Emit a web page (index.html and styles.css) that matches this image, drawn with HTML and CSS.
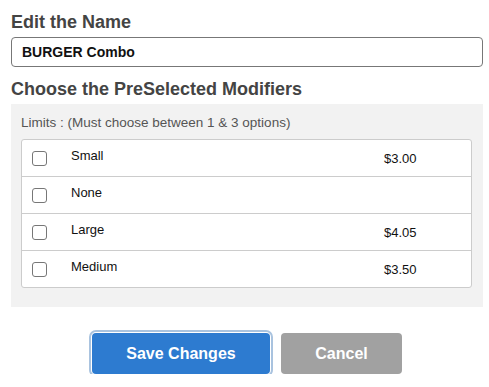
FILE: index.html
```html
<!DOCTYPE html>
<html lang="en">
<head>
  <meta charset="UTF-8" />
  <meta name="viewport" content="width=device-width, initial-scale=1.0"/>
  <title>Edit Combo</title>
  <link rel="stylesheet" href="styles.css">
</head>
<body>

  <div class="editor">
    <h2 class="section-title">Edit the Name</h2>
    <input type="text" class="name-input" value="BURGER Combo">

    <h2 class="section-title">Choose the PreSelected Modifiers</h2>
    <div class="modifiers-panel">
      <div class="limits">Limits : (Must choose between 1 &amp; 3 options)</div>
      <table class="modifiers-table">
        <tr>
          <td class="check-cell"><input type="checkbox" class="mod-check"></td>
          <td class="name-cell"><span>Small</span></td>
          <td class="price-cell">$3.00</td>
        </tr>
        <tr>
          <td class="check-cell"><input type="checkbox" class="mod-check"></td>
          <td class="name-cell"><span>None</span></td>
          <td class="price-cell"></td>
        </tr>
        <tr>
          <td class="check-cell"><input type="checkbox" class="mod-check"></td>
          <td class="name-cell"><span>Large</span></td>
          <td class="price-cell">$4.05</td>
        </tr>
        <tr>
          <td class="check-cell"><input type="checkbox" class="mod-check"></td>
          <td class="name-cell"><span>Medium</span></td>
          <td class="price-cell">$3.50</td>
        </tr>
      </table>
    </div>

    <div class="actions">
      <button class="btn btn-save">Save Changes</button>
      <button class="btn btn-cancel">Cancel</button>
    </div>
  </div>

</body>
</html>
```

FILE: styles.css
```css
body {
  margin: 0;
  font-family: 'Liberation Sans', Arial, sans-serif;
  background-color: #fff;
  color: #111;
}

.editor {
  padding: 11px 6px 0 11px;
}

.section-title {
  font-size: 18px;
  line-height: 22px;
  font-weight: bold;
  color: #444;
  margin: 0 0 4px;
}

.name-input {
  display: block;
  box-sizing: border-box;
  width: 472px;
  height: 30px;
  margin: 0 0 11px;
  padding: 0 10px;
  border: 1px solid #777;
  border-radius: 4px;
  font-family: inherit;
  font-size: 14px;
  font-weight: bold;
  color: #111;
}

.modifiers-panel {
  width: 472px;
  box-sizing: border-box;
  background-color: #f2f2f2;
  padding: 11px 11px 19px 10px;
  margin-top: 3px;
}

.limits {
  font-size: 13.5px;
  color: #555;
  line-height: 16px;
  margin-bottom: 8px;
}

.modifiers-table {
  width: 100%;
  border-collapse: separate;
  border-spacing: 0;
  background-color: #fff;
  border: 1px solid #ccc;
  border-radius: 3px;
  font-size: 13px;
}

.modifiers-table td {
  height: 36px;
  padding: 0;
  border-top: 1px solid #ccc;
  vertical-align: middle;
}

.modifiers-table tr:first-child td {
  border-top: none;
}

.check-cell {
  width: 39px;
  padding-left: 10px !important;
}

.mod-check {
  appearance: none;
  -webkit-appearance: none;
  display: block;
  width: 15px;
  height: 15px;
  margin: 0;
  border: 1px solid #777;
  border-radius: 3px;
  background: #fff;
}

.name-cell span {
  display: inline-block;
  margin-bottom: 5px;
}

.price-cell {
  width: 87px;
}

.actions {
  display: flex;
  justify-content: center;
  gap: 11px;
  margin-top: 26px;
}

.btn {
  border: none;
  border-radius: 4px;
  height: 41px;
  font-family: inherit;
  font-size: 16px;
  font-weight: bold;
  color: #fff;
  cursor: pointer;
}

.btn-save {
  width: 178px;
  background-color: #2d7bd0;
  outline: 2px solid #a9c3df;
  outline-offset: 1px;
}

.btn-cancel {
  width: 121px;
  background-color: #a1a1a1;
}
```
